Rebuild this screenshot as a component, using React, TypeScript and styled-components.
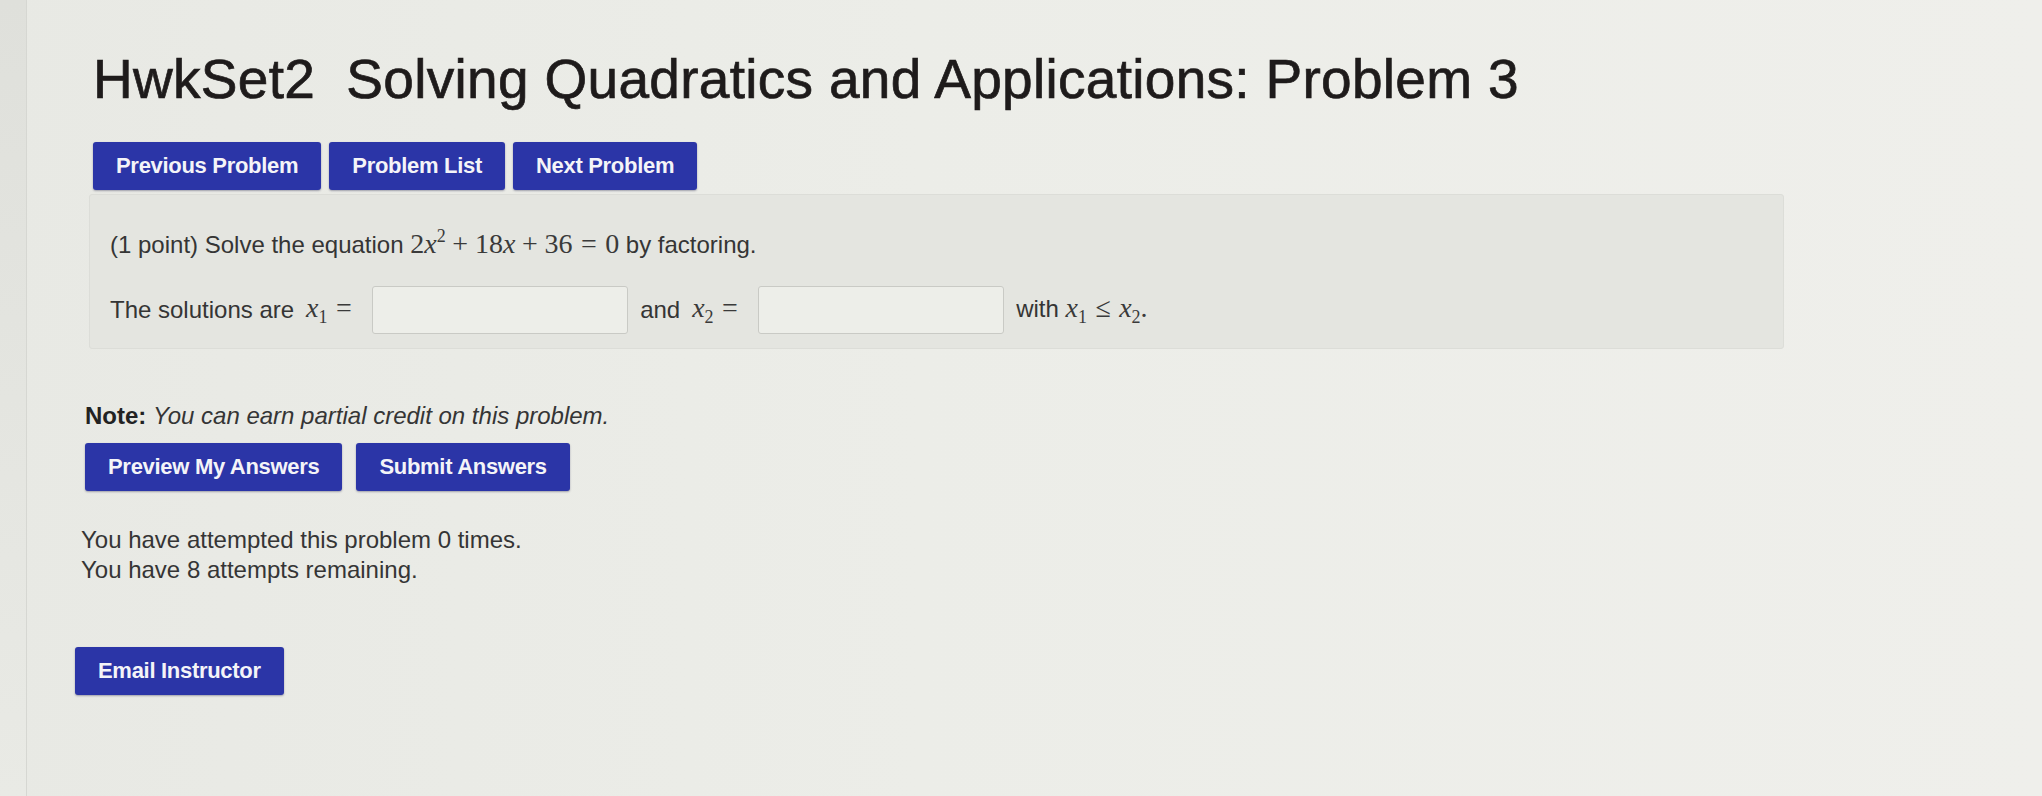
import styled, { createGlobalStyle } from "styled-components";

const GlobalStyle = createGlobalStyle`
  html, body {
    margin: 0;
    padding: 0;
  }
  body {
    background: linear-gradient(90deg, #e8e9e4 0%, #ecede8 45%, #efefeb 100%);
    font-family: "Liberation Sans", Arial, sans-serif;
    color: #2a2a2a;
  }
`;

const Page = styled.div`
  display: flex;
  width: 2042px;
  height: 796px;
  overflow: hidden;
`;

const SideEdge = styled.div`
  width: 26px;
  flex: none;
  background: linear-gradient(180deg, #dfe0db 0%, #e2e3de 30%, #e9eae5 100%);
  border-right: 1px solid #d6d7d2;
`;

const Main = styled.main`
  flex: 1;
  padding: 46px 0 0 66px;
`;

const Title = styled.h1`
  margin: 0 0 30px 0;
  font-size: 55px;
  font-weight: 400;
  line-height: 66px;
  color: #1e1b1b;
  letter-spacing: 0.3px;
  -webkit-text-stroke: 0.7px #1e1b1b;
  white-space: pre;
`;

const ButtonRow = styled.div<{ $gap: number; $shift?: number }>`
  display: flex;
  gap: ${(p) => p.$gap}px;
  margin-left: ${(p) => p.$shift ?? 0}px;
`;

const BlueButton = styled.button`
  height: 48px;
  padding: 0 23px;
  border: none;
  border-radius: 3px;
  background: #2b35a7;
  color: #f4f4f8;
  font-family: "Liberation Sans", Arial, sans-serif;
  font-weight: 700;
  font-size: 22px;
  letter-spacing: -0.3px;
  box-shadow: 0 1px 2px rgba(20, 20, 60, 0.35);
  cursor: pointer;
`;

const ProblemBox = styled.section`
  width: 1695px;
  box-sizing: border-box;
  margin-top: 4px;
  margin-left: -4px;
  padding: 26px 20px 14px 20px;
  background: #e4e5e0;
  border: 1px solid #dcddd8;
  border-radius: 3px;
`;

const Line = styled.p`
  margin: 0 0 26px 0;
  font-size: 24px;
  line-height: 30px;
  color: #353535;
`;

const AnswerRow = styled.div`
  display: flex;
  align-items: center;
  gap: 12px;
  font-size: 24px;
  color: #353535;
`;

const Math = styled.span`
  font-family: "Liberation Serif", "DejaVu Serif", serif;
  font-size: 28px;
  color: #3a3a3a;
  white-space: nowrap;
`;

const Var = styled.i`
  font-family: "Liberation Serif", "DejaVu Serif", serif;
`;

const Op = styled.span<{ $rel?: boolean }>`
  display: inline-block;
  margin: 0 ${(p) => (p.$rel ? 0.3 : 0.24)}em;
`;

const Index = styled.span<{ $up?: boolean }>`
  font-size: 18px;
  vertical-align: ${(p) => (p.$up ? "11px" : "-6px")};
`;

const AnswerInput = styled.input<{ $w: number }>`
  width: ${(p) => p.$w}px;
  height: 48px;
  box-sizing: border-box;
  border: 1px solid #c9cac5;
  border-radius: 3px;
  background: #edeee9;
`;

const Note = styled.p`
  margin: 52px 0 12px -8px;
  font-size: 24px;
  line-height: 30px;
  color: #353535;

  b {
    font-weight: 700;
    color: #222;
  }
  em {
    font-style: italic;
  }
`;

const Attempts = styled.div`
  margin-top: 34px;
  margin-left: -12px;
  font-size: 24px;
  line-height: 30px;
  color: #353535;
`;

const EmailRow = styled.div`
  margin-top: 62px;
  margin-left: -18px;
`;

export default function App() {
  return (
    <>
      <GlobalStyle />
      <Page>
        <SideEdge />
        <Main>
          <Title>HwkSet2  Solving Quadratics and Applications: Problem 3</Title>

          <ButtonRow $gap={8}>
            <BlueButton>Previous Problem</BlueButton>
            <BlueButton>Problem List</BlueButton>
            <BlueButton>Next Problem</BlueButton>
          </ButtonRow>

          <ProblemBox>
            <Line>
              (1 point) Solve the equation{" "}
              <Math>
                2<Var>x</Var>
                <Index $up>2</Index>
                <Op>+</Op>18<Var>x</Var>
                <Op>+</Op>36<Op $rel>=</Op>0
              </Math>{" "}
              by factoring.
            </Line>
            <AnswerRow>
              <span>The solutions are</span>
              <Math>
                <Var>x</Var>
                <Index>1</Index>
                <Op $rel>=</Op>
              </Math>
              <AnswerInput $w={256} />
              <span>and</span>
              <Math>
                <Var>x</Var>
                <Index>2</Index>
                <Op $rel>=</Op>
              </Math>
              <AnswerInput $w={246} />
              <span>
                with{" "}
                <Math>
                  <Var>x</Var>
                  <Index>1</Index>
                  <Op $rel>≤</Op>
                  <Var>x</Var>
                  <Index>2</Index>.
                </Math>
              </span>
            </AnswerRow>
          </ProblemBox>

          <Note>
            <b>Note:</b> <em>You can earn partial credit on this problem.</em>
          </Note>

          <ButtonRow $gap={14} $shift={-8}>
            <BlueButton>Preview My Answers</BlueButton>
            <BlueButton>Submit Answers</BlueButton>
          </ButtonRow>

          <Attempts>
            You have attempted this problem 0 times.
            <br />
            You have 8 attempts remaining.
          </Attempts>

          <EmailRow>
            <BlueButton>Email Instructor</BlueButton>
          </EmailRow>
        </Main>
      </Page>
    </>
  );
}
